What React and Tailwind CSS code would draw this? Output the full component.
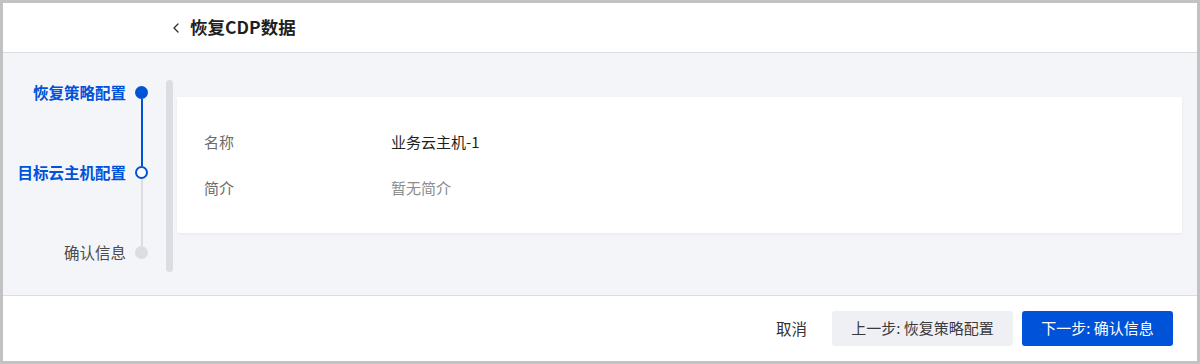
import React from 'react';

const steps = [
  { label: '恢复策略配置', state: 'done' },
  { label: '目标云主机配置', state: 'current' },
  { label: '确认信息', state: 'todo' },
];

const Dot = ({ state }) => {
  if (state === 'done') return <div className="w-[13px] h-[13px] rounded-full bg-[#0052d9]" />;
  if (state === 'current') return <div className="w-[13px] h-[13px] rounded-full border-2 border-[#0052d9] bg-white" />;
  return <div className="w-[13px] h-[13px] rounded-full bg-[#dcdde1]" />;
};

const StepRail = () => (
  <div className="flex flex-col w-[145px] -mt-px">
    {steps.map((s, i) => {
      const topColor = i === 0 ? 'bg-transparent' : steps[i - 1].state === 'done' ? 'bg-[#0052d9]' : 'bg-[#dcdde1]';
      const bottomColor = i === steps.length - 1 ? 'bg-transparent' : s.state === 'done' ? 'bg-[#0052d9]' : 'bg-[#dcdde1]';
      const textCls = s.state === 'todo' ? 'text-[#4b4b4b] font-normal' : 'text-[#0052d9] font-semibold';
      return (
        <div key={s.label} className="flex items-center justify-end h-[80px]">
          <span className={`text-[15.5px] leading-[22px] mr-[9px] ${textCls}`}>{s.label}</span>
          <div className="flex flex-col items-center w-[13px] h-full">
            <div className={`w-[2px] flex-1 ${topColor}`} />
            <Dot state={s.state} />
            <div className={`w-[2px] flex-1 ${bottomColor}`} />
          </div>
        </div>
      );
    })}
  </div>
);

export default function App() {
  return (
    <div
      className="w-[1200px] h-[364px] border-[3px] border-[#c2c2c2] bg-white flex flex-col overflow-hidden"
      style={{ fontFamily: '"Noto Sans CJK SC", "Noto Sans", sans-serif' }}
    >
      {/* header */}
      <div className="h-[50px] shrink-0 border-b border-[#dcdde3] flex items-center pl-[166px]">
        <svg width="14" height="14" viewBox="0 0 14 14" className="text-[#333]">
          <path d="M9 3 L5 7 L9 11" fill="none" stroke="currentColor" strokeWidth="1.4" strokeLinecap="round" strokeLinejoin="round" />
        </svg>
        <span className="ml-[7px] text-[17.5px] font-bold text-[#1f1f1f]">恢复CDP数据</span>
      </div>

      {/* body */}
      <div className="flex-1 bg-[#f4f5f9] flex pr-[15px]">
        <StepRail />
        <div className="ml-[18px] mt-[27px] w-[7px] h-[192px] rounded-full bg-[#dcdde2]" />
        <div className="ml-[4px] mt-[44px] flex-1 self-start bg-white rounded-[2px] shadow-[0_1px_3px_rgba(0,0,0,0.06)] pl-[27px] py-[34px] flex flex-col gap-[24px]">
          <div className="flex text-[15px] leading-[22px]">
            <span className="w-[187px] text-[#6b6b6b]">名称</span>
            <span className="text-[#1f1f1f]">业务云主机-1</span>
          </div>
          <div className="flex text-[15px] leading-[22px]">
            <span className="w-[187px] text-[#6b6b6b]">简介</span>
            <span className="text-[#8c8c8c]">暂无简介</span>
          </div>
        </div>
      </div>

      {/* footer */}
      <div className="h-[66px] shrink-0 border-t border-[#dcdde3] flex items-center justify-end pr-[24px] gap-[9px]">
        <button className="h-[35px] px-[16px] text-[15.5px] text-[#333]">取消</button>
        <button className="h-[35px] w-[181px] rounded-[3px] bg-[#eff0f4] text-[15px] text-[#3a3a3a]">上一步: 恢复策略配置</button>
        <button className="h-[35px] w-[151px] rounded-[3px] bg-[#0052d9] text-[15px] text-white">下一步: 确认信息</button>
      </div>
    </div>
  );
}
